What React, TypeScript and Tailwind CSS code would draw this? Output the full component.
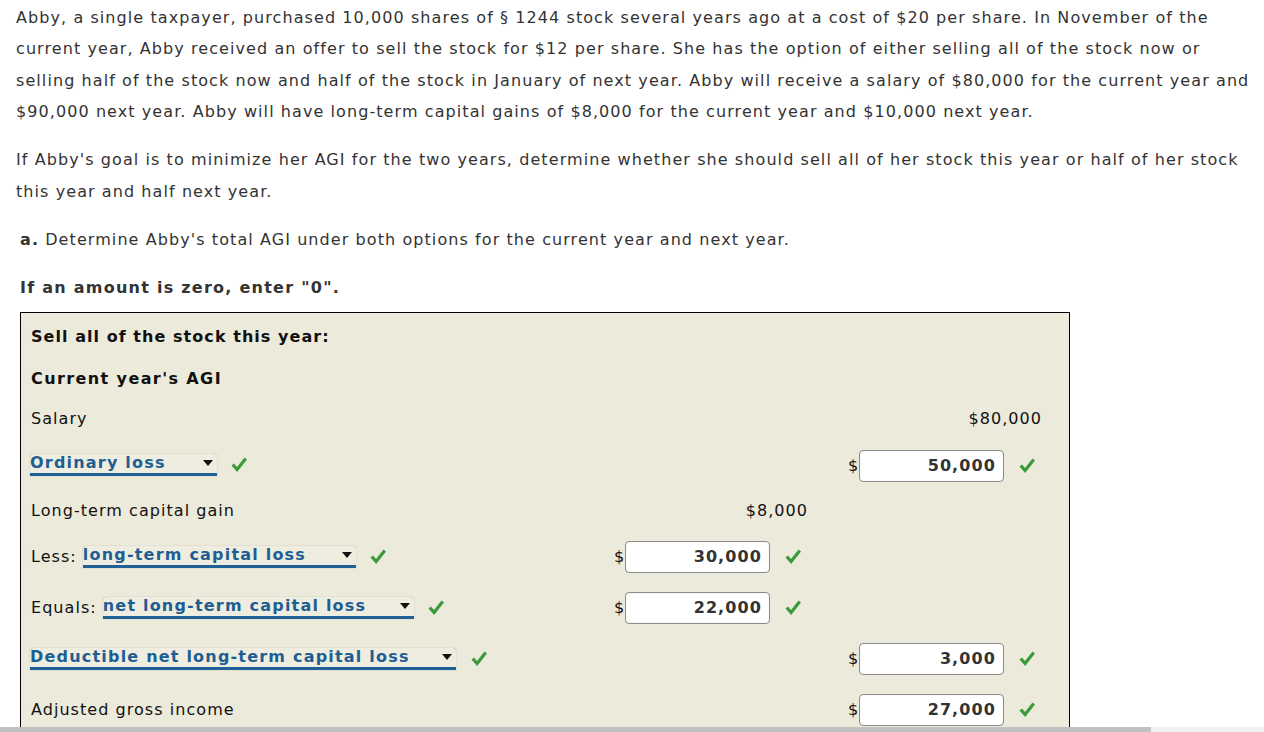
import type { ReactNode } from 'react'

function Check() {
  return (
    <svg width="18" height="18" viewBox="0 0 18 18" className="shrink-0">
      <path
        d="M1.5 9.5 L4 7.5 L7 11 L14.5 1.5 L17 3.5 L7.2 16 Z"
        fill="#3b9a3a"
      />
    </svg>
  )
}

function Select({ label, width }: { label: string; width: number }) {
  return (
    <span
      className="inline-flex items-center justify-between rounded-t-[4px] border-b-[3px] border-[#1f6197] bg-[#efeddf] shadow-[0_0_1px_rgba(0,0,0,0.4)] h-[22px] font-bold text-[#1d5e94] tracking-[1.2px]"
      style={{ width }}
    >
      <span className="leading-none whitespace-nowrap">{label}</span>
      <svg width="10" height="6" viewBox="0 0 10 6" className="mr-[4px] shrink-0">
        <path d="M0 0 H10 L5 6 Z" fill="#111" />
      </svg>
    </span>
  )
}

function Amount({ value }: { value: string }) {
  return (
    <div className="flex items-center">
      <span className="w-[11px] text-[#111] tracking-normal">$</span>
      <div className="w-[145px] h-[32px] rounded-[4px] border border-[#8c8c8c] bg-white shadow-[inset_0_0_1px_rgba(0,0,0,0.2)] flex items-center justify-end pr-[7px] font-bold text-[#333] tracking-[1.1px]">
        {value}
      </div>
      <span className="ml-[14px]">
        <Check />
      </span>
    </div>
  )
}

function Row({
  h,
  label,
  mid,
  right
}: {
  h: number
  label?: ReactNode
  mid?: ReactNode
  right?: ReactNode
}) {
  return (
    <div className="grid grid-cols-[583px_234px_1fr] items-center" style={{ height: h }}>
      <div className="flex items-center whitespace-nowrap">{label}</div>
      <div>{mid}</div>
      <div>{right}</div>
    </div>
  )
}

export default function App() {
  return (
    <div
      className="h-[732px] w-[1264px] overflow-hidden flex flex-col bg-white text-[16px] tracking-[1.05px]"
      style={{ fontFamily: '"DejaVu Sans", Verdana, sans-serif' }}
    >
      <div className="flex-1 overflow-hidden">
        <div className="pl-4 w-[1264px] text-[#333] leading-[31.33px] pt-[2px] whitespace-nowrap tracking-[1.08px]">
          <p>
            Abby, a single taxpayer, purchased 10,000 shares of § 1244 stock several years ago at a cost of $20 per
            share. In November of the
            <br />
            current year, Abby received an offer to sell the stock for $12 per share. She has the option of either
            selling all of the stock now or
            <br />
            selling half of the stock now and half of the stock in January of next year. Abby will receive a salary of
            $80,000 for the current year and
            <br />
            $90,000 next year. Abby will have long-term capital gains of $8,000 for the current year and $10,000 next
            year.
          </p>
          <p className="mt-[17px]">
            If Abby's goal is to minimize her AGI for the two years, determine whether she should sell all of her stock
            this year or half of her stock
            <br />
            this year and half next year.
          </p>
          <p className="mt-[17px] pl-[4px]">
            <span className="font-bold">a.</span> Determine Abby's total AGI under both options for the current year
            and next year.
          </p>
          <p className="mt-[17px] pl-[4px] font-bold tracking-[1.25px]">If an amount is zero, enter "0".</p>
        </div>

        <div className="ml-[20px] mt-[8px] w-[1050px] border border-black bg-[#eceadb] pl-[10px] text-[#111]">
          <Row h={49} label={<span className="font-bold">Sell all of the stock this year:</span>} />
          <Row h={34} label={<span className="font-bold tracking-[1.4px]">Current year's AGI</span>} />
          <Row h={46} label="Salary" right={<div className="text-right pr-[27px]">$80,000</div>} />
          <Row
            h={48}
            label={
              <span className="flex items-center -ml-[1px] -mt-[2px]">
                <Select label="Ordinary loss" width={187} />
                <span className="ml-[13px]">
                  <Check />
                </span>
              </span>
            }
            right={<Amount value="50,000" />}
          />
          <Row h={42} label="Long-term capital gain" mid={<div className="text-right pr-[40px]">$8,000</div>} />
          <Row
            h={50}
            label={
              <span className="flex items-center">
                <span className="mr-[6px]">Less:</span>
                <Select label="long-term capital loss" width={273} />
                <span className="ml-[13px]">
                  <Check />
                </span>
              </span>
            }
            mid={<Amount value="30,000" />}
          />
          <Row
            h={52}
            label={
              <span className="flex items-center">
                <span className="mr-[6px]">Equals:</span>
                <Select label="net long-term capital loss" width={311} />
                <span className="ml-[13px]">
                  <Check />
                </span>
              </span>
            }
            mid={<Amount value="22,000" />}
          />
          <Row
            h={50}
            label={
              <span className="flex items-center -ml-[1px]">
                <Select label="Deductible net long-term capital loss" width={426} />
                <span className="ml-[14px]">
                  <Check />
                </span>
              </span>
            }
            right={<Amount value="3,000" />}
          />
          <Row h={52} label="Adjusted gross income" right={<Amount value="27,000" />} />
        </div>
      </div>
      <div className="h-[5px] shrink-0 bg-[#f1f1f1]">
        <div className="h-full w-[1151px] bg-[#c1c1c1]" />
      </div>
    </div>
  )
}
